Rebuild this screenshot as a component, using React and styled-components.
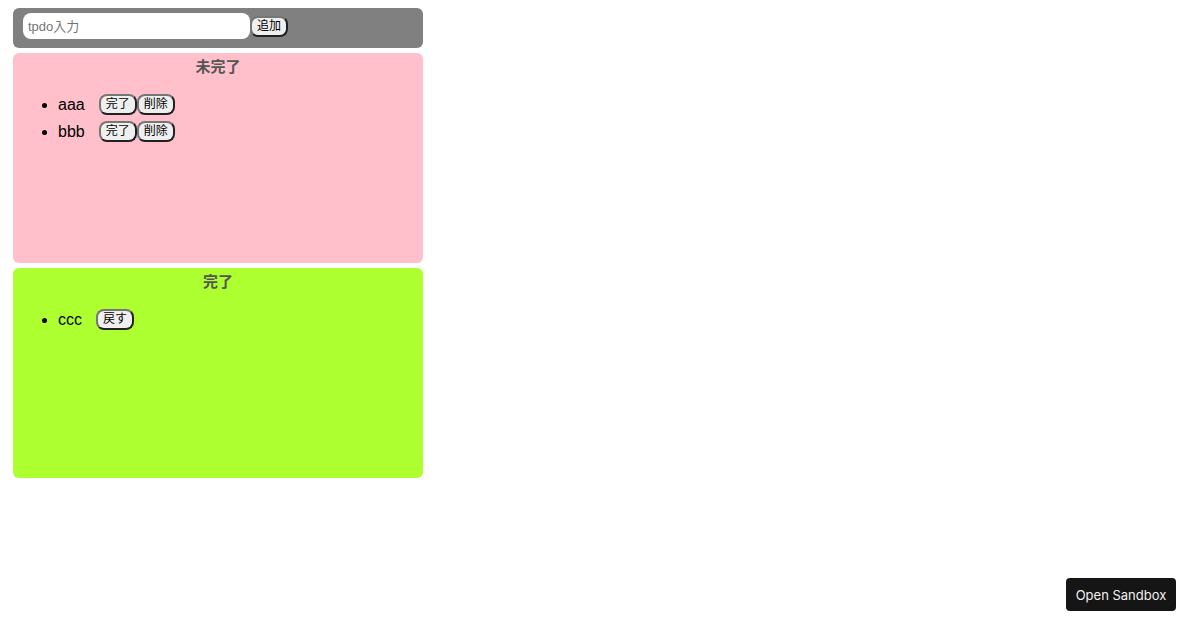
import { useState } from "react";
import styled, { createGlobalStyle } from "styled-components";

const GlobalStyle = createGlobalStyle`
    body {
        margin: 3px 8px 8px;
        font-family: "Liberation Sans", "Noto Sans CJK JP", sans-serif;
        background: #fff;
    }
`;

// Panels
const Area = styled.div`
    width: 400px;
    height: ${p => p.$height}px;
    padding: 5px;
    margin: 5px;
    border-radius: 6px;
    background-color: ${p => p.$bg};
`;

const InputRow = styled.div`
    display: flex;
    align-items: center;
`;

const TodoInput = styled.input`
    box-sizing: border-box;
    width: 227px;
    height: 26px;
    margin: 0 0 0 5px;
    padding: 5px 5px;
    border: none;
    border-radius: 8px;
    outline: none;
    font-family: "Liberation Sans", "Noto Sans CJK JP", sans-serif;
    font-size: 13px;
    &::placeholder {
        color: #757575;
    }
`;

const Button = styled.button`
    height: 21px;
    margin: 0;
    padding: 1px 5px;
    border: 2px outset #767676;
    border-radius: 8px;
    background-color: #efefef;
    color: #000;
    font-family: "Liberation Sans", "Noto Sans CJK JP", sans-serif;
    font-size: 12px;
    line-height: 15px;
    cursor: pointer;
`;

const Title = styled.p`
    margin: 0;
    text-align: center;
    font-size: 15px;
    line-height: 18px;
    font-weight: bold;
    color: #555;
`;

const List = styled.ul`
    margin: 16px 0;
    padding-left: 40px;
`;

const Item = styled.li`
    padding: 2px 0 4px;
`;

const Row = styled.div`
    display: flex;
    align-items: center;
`;

const ItemText = styled.span`
    margin-right: 14px;
    font-size: 16px;
`;

const SandboxButton = styled.a`
    position: fixed;
    right: 24px;
    bottom: 19px;
    width: 110px;
    height: 33px;
    box-sizing: border-box;
    display: flex;
    align-items: center;
    justify-content: center;
    border-radius: 4px;
    background: #151515;
    color: #f2f2f2;
    font-family: Inter, "Liberation Sans", sans-serif;
    font-size: 13px;
    text-decoration: none;
`;

const App = () => {
    //Todo lists
    const [todoText, setTodoText] = useState("");
    const [incomplete, setIncomplete] = useState(["aaa", "bbb"]);
    const [complete, setComplete] = useState(["ccc"]);

    const onAdd = () => {
        if (todoText === "") return;
        setIncomplete([...incomplete, todoText]);
        setTodoText("");
    };

    const onDelete = (index) => {
        setIncomplete(incomplete.filter((_, i) => i !== index));
    };

    const onComplete = (index) => {
        setComplete([...complete, incomplete[index]]);
        onDelete(index);
    };

    const onBack = (index) => {
        setIncomplete([...incomplete, complete[index]]);
        setComplete(complete.filter((_, i) => i !== index));
    };

    return (
        <>
            <GlobalStyle />
            <Area $bg="grey" $height={30}>
                <InputRow>
                    <TodoInput
                        placeholder="tpdo入力"
                        value={todoText}
                        onChange={(e) => setTodoText(e.target.value)}
                    />
                    <Button onClick={onAdd}>追加</Button>
                </InputRow>
            </Area>
            <Area $bg="pink" $height={200}>
                <Title>未完了</Title>
                <List>
                    {incomplete.map((todo, index) => (
                        <Item key={todo}>
                            <Row>
                                <ItemText>{todo}</ItemText>
                                <Button onClick={() => onComplete(index)}>完了</Button>
                                <Button onClick={() => onDelete(index)}>削除</Button>
                            </Row>
                        </Item>
                    ))}
                </List>
            </Area>
            <Area $bg="greenyellow" $height={200}>
                <Title>完了</Title>
                <List>
                    {complete.map((todo, index) => (
                        <Item key={todo}>
                            <Row>
                                <ItemText>{todo}</ItemText>
                                <Button onClick={() => onBack(index)}>戻す</Button>
                            </Row>
                        </Item>
                    ))}
                </List>
            </Area>
            <SandboxButton href="#">Open Sandbox</SandboxButton>
        </>
    );
};

export default App;
